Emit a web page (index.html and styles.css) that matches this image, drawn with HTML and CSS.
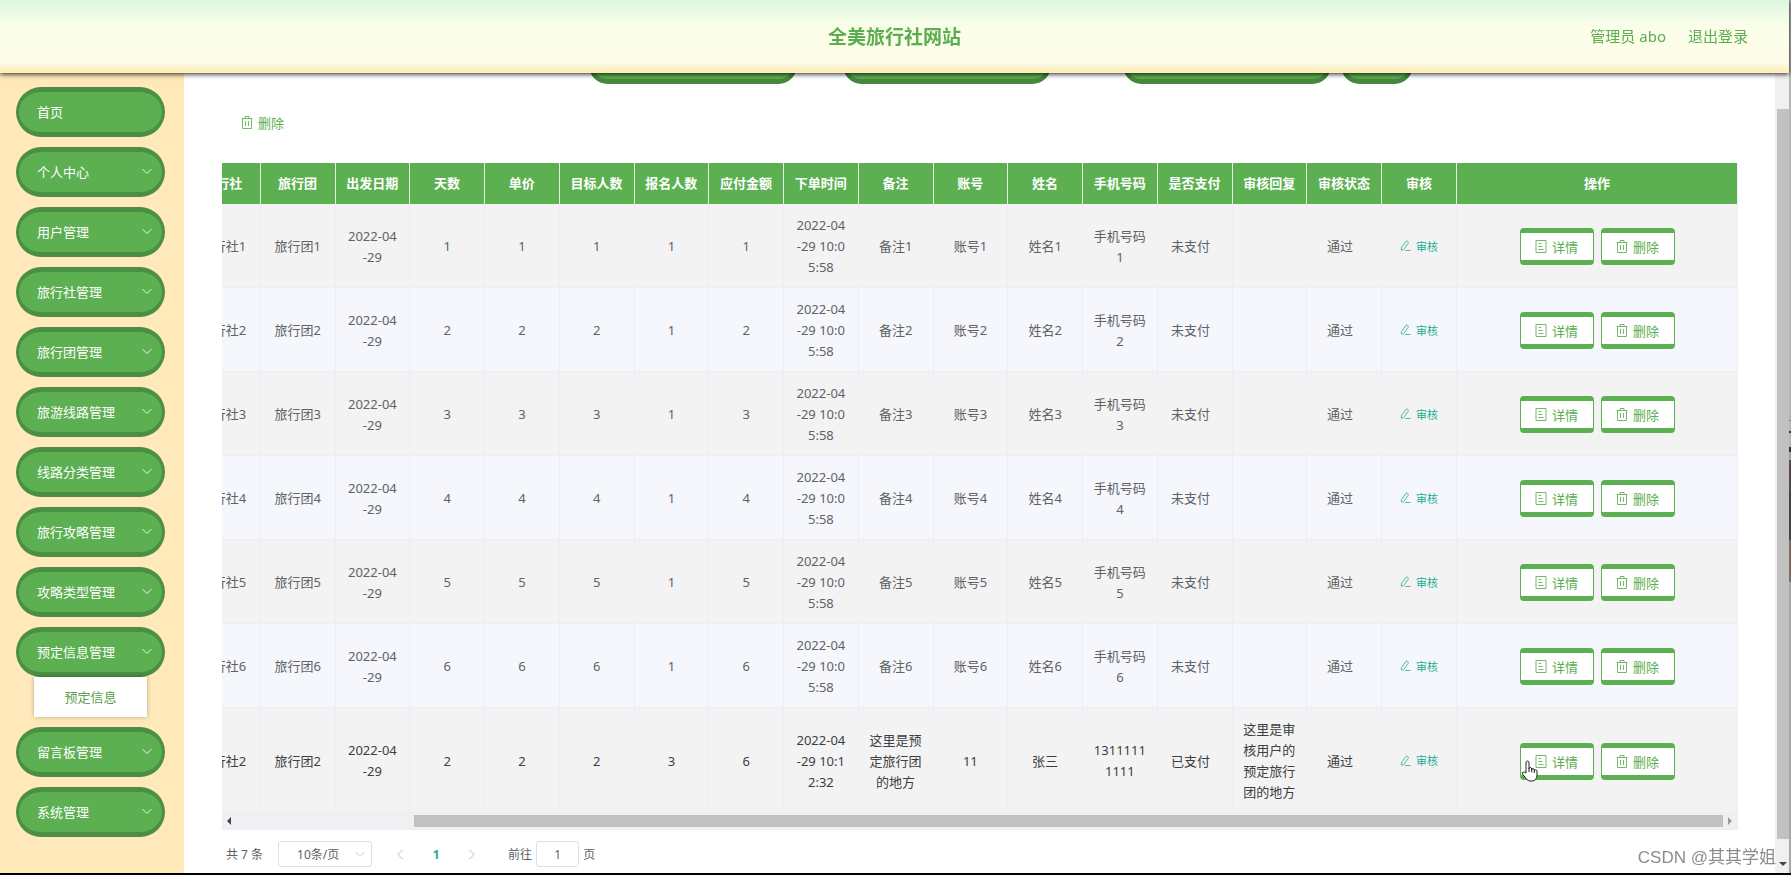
FILE: index.html
```
<!DOCTYPE html>
<html lang="zh-CN">

<head>
    <meta charset="UTF-8">
    <meta name="viewport" content="width=device-width, initial-scale=1.0">
    <title>全美旅行社网站</title>
    <link rel="stylesheet" href="styles.css">
</head>

<body>
    <svg class="sprite" aria-hidden="true">
        <symbol id="icon-down" viewBox="0 0 12 12">
            <path d="M1.500 3.500 6 8l4.500-4.500" />
        </symbol>
        <symbol id="icon-left" viewBox="0 0 12 12">
            <path d="M8.500 1.500 4 6l4.500 4.500" />
        </symbol>
        <symbol id="icon-right" viewBox="0 0 12 12">
            <path d="M3.500 1.500 8 6l-4.500 4.500" />
        </symbol>
        <symbol id="icon-delete" viewBox="0 0 12 13">
            <path d="M.5 2.500h11M4 2.500v-2h4v2M1.500 2.500v10h9v-10M4.500 5v5M7.500 5v5" />
        </symbol>
        <symbol id="icon-detail" viewBox="0 0 12 13">
            <path d="M1 .5h10v12H1zM3.500 3.500H6M3.500 6.500h4M3.500 9.500h5" />
        </symbol>
        <symbol id="icon-edit" viewBox="0 0 12 12">
            <path d="M1.500 8.500 6.500 1.500q1-1 2 0t.5 2L4 10.500l-2.500.5zM5.500 11.500h6" />
        </symbol>
    </svg>

    <header class="header">
        <h1 class="title">全美旅行社网站</h1>
        <div class="user">
            <span>管理员 abo</span>
            <a href="#">退出登录</a>
        </div>
    </header>

    <div class="page">
        <nav class="sidebar" id="menu"></nav>

        <main class="content">
            <form class="search">
                <input type="text" class="pill" aria-label="旅行社">
                <input type="text" class="pill" aria-label="旅行团">
                <input type="text" class="pill pill-last" aria-label="是否支付">
                <button type="button" class="pill pill-btn" aria-label="查询"></button>
            </form>

            <button type="button" class="batch-del"><svg class="icon"><use href="#icon-delete" /></svg>删除</button>

            <div class="table-box">
                <div class="table-view">
                    <table class="table">
                        <thead>
                            <tr id="thead"></tr>
                        </thead>
                        <tbody id="tbody"></tbody>
                    </table>
                </div>
                <div class="hbar">
                    <span class="arrow arrow-left"></span>
                    <span class="hbar-thumb"></span>
                    <span class="arrow arrow-right"></span>
                </div>
            </div>

            <div class="pager">
                <span class="total">共 7 条</span>
                <span class="size">
                    <select aria-label="每页条数">
                        <option>10条/页</option>
                    </select>
                    <svg class="icon"><use href="#icon-down" /></svg>
                </span>
                <button type="button" class="page-btn" aria-label="上一页"><svg class="icon"><use href="#icon-left" /></svg></button>
                <button type="button" class="page-btn active">1</button>
                <button type="button" class="page-btn" aria-label="下一页"><svg class="icon"><use href="#icon-right" /></svg></button>
                <label class="jump">前往<input type="text" value="1">页</label>
            </div>
        </main>

        <div class="vbar">
            <span class="vbar-thumb"></span>
            <span class="arrow arrow-down"></span>
        </div>
        <div class="edge"></div>
    </div>

    <div class="watermark">CSDN @其其学姐</div>

    <script>
        let menus = ["首页", "个人中心", "用户管理", "旅行社管理", "旅行团管理", "旅游线路管理", "线路分类管理",
            "旅行攻略管理", "攻略类型管理", "预定信息管理", "留言板管理", "系统管理"]
        let heads = ["旅行社", "旅行团", "出发日期", "天数", "单价", "目标人数", "报名人数", "应付金额", "下单时间",
            "备注", "账号", "姓名", "手机号码", "是否支付", "审核回复", "审核状态", "审核", "操作"]

        function icon(name) {
            return `<svg class="icon"><use href="#icon-${name}" /></svg>`
        }

        // 左侧菜单
        document.getElementById("menu").innerHTML = menus.map((name, i) => {
            let sub = name == "预定信息管理" ? `<a class="sub" href="#">预定信息</a>` : ""
            return `<div class="menu-item"><button type="button" class="menu-btn">${name}${i > 0 ? icon("down") : ""}</button>${sub}</div>`
        }).join("")

        // 表格数据
        let rows = []
        for (let i = 1; i <= 6; i++) {
            rows.push([`旅行社${i}`, `旅行团${i}`, "2022-04<br>-29", i, i, i, 1, i, "2022-04<br>-29 10:0<br>5:58",
                `备注${i}`, `账号${i}`, `姓名${i}`, `手机号码<br>${i}`, "未支付", "", "通过"])
        }
        rows.push(["旅行社2", "旅行团2", "2022-04<br>-29", 2, 2, 2, 3, 6, "2022-04<br>-29 10:1<br>2:32",
            "这里是预<br>定旅行团<br>的地方", 11, "张三", "1311111<br>1111", "已支付", "这里是审<br>核用户的<br>预定旅行<br>团的地方", "通过"])

        document.getElementById("thead").innerHTML = heads.map(v => `<th>${v}</th>`).join("")
        document.getElementById("tbody").innerHTML = rows.map((row, i) => `
            <tr class="${i == 6 ? "hover" : ""}">
                ${row.map((v, n) => `<td class="${n == 13 || n == 15 ? "state" : ""}">${v}</td>`).join("")}
                <td><button type="button" class="audit">${icon("edit")}审核</button></td>
                <td><div class="ops">
                    <button type="button" class="op">${icon("detail")}详情</button>
                    <button type="button" class="op">${icon("delete")}删除</button>
                    ${i == 6 ? `<svg class="hand" viewBox="0 0 18 22"><path d="M5 13V3q0-2 1.500-2T8 3v6q0-1.500 1.300-1.500T10.700 9v1q0-1.300 1.300-1.300t1.300 1.300v1q0-1.200 1.200-1.200T16 11v4q0 3-1.500 4.500T11 21H9q-2 0-3.500-2L1.500 14q-.8-1.500.5-2 1-.3 3 1zM8 9v3M10.700 10v2.500M13.300 11v2" /></svg>` : ""}
                </div></td>
            </tr>`).join("")
    </script>
</body>

</html>
```
FILE: styles.css
```
* {
    box-sizing: border-box;
}

body {
    margin: 0;
    height: 100vh;
    overflow: hidden;
    border-bottom: 2px solid #000;
    background: #fff;
    color: #606266;
    font-family: "Noto Sans", "Noto Sans CJK SC", sans-serif;
    font-size: 13px;
}

button,
input,
select {
    font-family: inherit;
    font-size: 13px;
}

button {
    padding: 0;
    border: none;
    background: none;
    cursor: pointer;
}

a {
    color: inherit;
    text-decoration: none;
}

.sprite {
    position: absolute;
    width: 0;
    height: 0;
}

.icon {
    flex: none;
    width: 12px;
    height: 13px;
    fill: none;
    stroke: currentColor;
    stroke-width: 1;
    opacity: 0.85;
}

/* 顶部 */
.header {
    position: fixed;
    top: 0;
    left: 0;
    right: 2px;
    z-index: 10;
    height: 73px;
    display: grid;
    grid-template-columns: 1fr auto 1fr;
    align-items: center;
    padding: 0 41px 2px;
    background: linear-gradient(#dcf7e2 0, #ecfae4 12px, #fbfeea 28px, #fdfde9 62px, #fbf6dc 66px, #fdefb8 70px, #fdefc0 73px);
    box-shadow: 0 1px 5px rgba(0, 0, 0, 0.9);
    color: #5cad50;
}

.title {
    grid-column: 2;
    margin: 0;
    font-size: 19px;
    font-weight: 700;
}

.user {
    display: flex;
    justify-content: flex-end;
    gap: 22px;
    font-size: 15px;
}

.page {
    display: flex;
    height: 100%;
}

/* 左侧菜单 */
.sidebar {
    flex: none;
    width: 184px;
    padding: 87px 19px 0 16px;
    background: #ffe9ba;
}

.menu-item {
    margin-bottom: 10px;
}

.menu-btn {
    display: flex;
    align-items: center;
    justify-content: space-between;
    width: 100%;
    height: 50px;
    padding: 0 9px 2px 18px;
    border: 3px solid #4a8f43;
    border-width: 5px 3px;
    border-radius: 25px;
    background: #5cb051;
    color: #fff;
}

.sub {
    display: block;
    height: 40px;
    margin: 0 18px;
    background: #fff;
    box-shadow: 0 0 4px rgba(0, 0, 0, 0.3);
    color: #5a9f50;
    line-height: 40px;
    text-align: center;
}

/* 内容 */
.content {
    flex: 1;
    min-width: 0;
    padding: 47px 37px 0 38px;
}

.search {
    display: flex;
    padding-left: 367px;
    gap: 46px;
}

.pill {
    width: 208px;
    height: 37px;
    border: 3px solid #46883e;
    border-width: 5px 3px;
    border-radius: 19px;
    background: #5cb051;
}

.pill-last {
    margin: 0 -36px 0 26px;
}

.pill-btn {
    width: 72px;
}

.batch-del {
    display: flex;
    align-items: center;
    gap: 5px;
    height: 40px;
    margin: 18px 0 21px 19px;
    color: #5cad50;
}

.table-box {
    border: 1px solid #ebeef5;
    border-width: 0 1px 1px 0;
}

/* 已滚动到最右侧 */
.table-view {
    display: flex;
    justify-content: flex-end;
    overflow: hidden;
}

.table {
    flex: none;
    width: calc(100% + 36px);
    table-layout: fixed;
    border-collapse: separate;
    border-spacing: 0;
    text-align: center;
    line-height: 21px;
    white-space: nowrap;
}

.table th {
    height: 41px;
    padding: 0;
    border-right: 1px solid #e6f2e4;
    background: #5cb051;
    color: #fff;
}

.table th:last-child {
    width: 280px;
}

.table td {
    padding: 11px 0 9px;
    border: 1px solid #ebeef5;
    border-width: 0 1px 1px 0;
    background: #f3f3f3;
}

.table th:last-child,
.table td:last-child {
    border-right: none;
}

.table tr:nth-child(even) td {
    background: #f5f7fc;
}

.table .state {
    padding-right: 8px;
}

.table .hover {
    color: #3c3e42;
}

.audit {
    display: inline-flex;
    align-items: center;
    gap: 5px;
    color: #1aae94;
    font-size: 11px;
}

.audit .icon {
    width: 11px;
    height: 11px;
}

.ops {
    position: relative;
    display: flex;
    justify-content: center;
    gap: 7px;
}

.op {
    display: flex;
    align-items: center;
    justify-content: center;
    gap: 5px;
    width: 74px;
    height: 37px;
    border: 1px solid #5cb051;
    border-width: 5px 1px;
    border-radius: 4px;
    background: #fff;
    color: #5cad50;
}

.hand {
    position: absolute;
    left: 64px;
    top: 17px;
    width: 18px;
    height: 22px;
    fill: #fff;
    stroke: #222;
}

/* 滚动条 */
.hbar {
    display: flex;
    align-items: center;
    justify-content: space-between;
    height: 16px;
    padding: 0 5px;
    background: #f0f0f2;
}

.hbar-thumb {
    width: 87%;
    height: 12px;
    margin: 0 5px 0 auto;
    background: #c1c1c1;
}

.arrow {
    border: 4px solid transparent;
}

.arrow-left {
    border-left: none;
    border-right-color: #444;
}

.arrow-right {
    border-right: none;
    border-left-color: #999;
}

.arrow-down {
    border-bottom: none;
    border-top-color: #444;
}

.vbar {
    display: flex;
    flex-direction: column;
    align-items: center;
    width: 14px;
    padding: 109px 0 7px 2px;
    background: #f0f0f0;
}

.vbar-thumb {
    flex: 1;
    width: 100%;
    margin-bottom: 23px;
    background: #c1c1c1;
}

/* 窗口右边缘 */
.edge {
    width: 2px;
    background: linear-gradient(#b4b4b4 420px, #4a90c0 420px 421px, #b4b4b4 421px 431px, #333 431px 433px, #b4b4b4 433px 447px, #333 447px 452px, #8aa 452px 460px, #5a4a45 460px 490px, #444 490px 540px, #86685e 540px 582px, #a8a8a8 582px);
}

/* 分页 */
.pager {
    display: flex;
    align-items: center;
    margin-top: 11px;
    padding-left: 4px;
    font-size: 12px;
}

.size {
    position: relative;
    width: 94px;
    margin: 0 10px 0 15px;
}

.size select {
    display: block;
    width: 100%;
    height: 26px;
    padding: 0 18px;
    border: 1px solid #dcdfe6;
    border-radius: 3px;
    appearance: none;
    background: #fff;
    color: #606266;
    font-size: 12px;
}

.size .icon {
    position: absolute;
    right: 6px;
    top: 7px;
    color: #c0c4cc;
}

.page-btn {
    display: flex;
    align-items: center;
    justify-content: center;
    width: 36px;
    height: 26px;
    color: #a8abb2;
    font-size: 12px;
}

.active {
    color: #1aae94;
    font-weight: 700;
}

.jump {
    display: flex;
    align-items: center;
    gap: 4px;
    margin-left: 18px;
}

.jump input {
    width: 43px;
    height: 26px;
    padding: 0;
    border: 1px solid #dcdfe6;
    border-radius: 3px;
    color: #606266;
    font-size: 12px;
    text-align: center;
}

.watermark {
    position: fixed;
    right: 15px;
    bottom: 7px;
    color: #8c8c8c;
    font-family: "Liberation Sans", "Noto Sans CJK SC", sans-serif;
    font-size: 17px;
    text-shadow: 1px 1px 0 #fff;
}
```
